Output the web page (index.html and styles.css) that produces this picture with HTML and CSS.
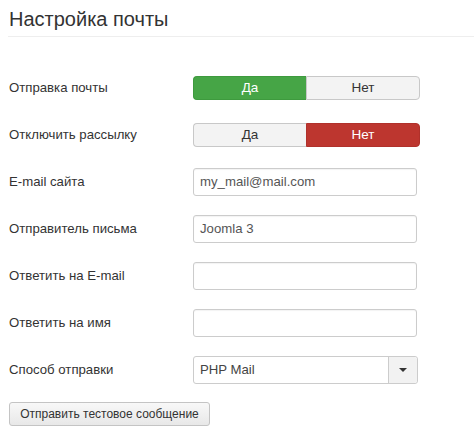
FILE: index.html
```html
<!DOCTYPE html>
<html lang="ru">
<head>
<meta charset="utf-8">
<link rel="stylesheet" href="styles.css">
</head>
<body>
<div class="page">
  <h2 class="title">Настройка почты</h2>
  <div class="form">
    <div class="row">
      <label class="label">Отправка почты</label>
      <div class="toggle">
        <span class="seg seg-yes active-green">Да</span>
        <span class="seg seg-no">Нет</span>
      </div>
    </div>
    <div class="row">
      <label class="label">Отключить рассылку</label>
      <div class="toggle">
        <span class="seg seg-yes">Да</span>
        <span class="seg seg-no active-red">Нет</span>
      </div>
    </div>
    <div class="row">
      <label class="label">E-mail сайта</label>
      <div class="input">my_mail@mail.com</div>
    </div>
    <div class="row">
      <label class="label">Отправитель письма</label>
      <div class="input">Joomla 3</div>
    </div>
    <div class="row">
      <label class="label">Ответить на E-mail</label>
      <div class="input"></div>
    </div>
    <div class="row">
      <label class="label">Ответить на имя</label>
      <div class="input"></div>
    </div>
    <div class="row">
      <label class="label">Способ отправки</label>
      <div class="select">
        <span class="select-value">PHP Mail</span>
        <span class="select-arrow"><span class="caret"></span></span>
      </div>
    </div>
  </div>
  <button class="btn">Отправить тестовое сообщение</button>
</div>
</body>
</html>
```
FILE: styles.css
```css
* { box-sizing: border-box; }
html, body { margin: 0; padding: 0; background: #fff; }
body {
  font-family: "Liberation Sans", Arial, sans-serif;
  color: #333;
  font-size: 13.2px;
}
.page { padding: 0 0 0 9px; }
.title {
  margin: 0;
  font-weight: normal;
  font-size: 20px;
  line-height: 24px;
  padding-top: 7px;
  height: 37px;
  border-bottom: 1px solid #eee;
  margin-left: -1px;
  padding-left: 1px;
  color: #333;
}
.form { margin-top: 27px; }
.row {
  display: flex;
  align-items: center;
  height: 47px;
}
.label {
  width: 184px;
  flex: none;
  font-size: 13.2px;
  color: #333;
}
.toggle {
  display: flex;
  width: 227px;
  height: 24px;
}
.seg {
  flex: 1;
  display: flex;
  align-items: center;
  justify-content: center;
  font-size: 13.5px;
  color: #333;
  background: #f3f3f3;
  border: 1px solid #c8c8c8;
}
.seg-yes { border-radius: 4px 0 0 4px; border-right: none; }
.seg-no { border-radius: 0 4px 4px 0; }
.active-green {
  background: #46a546;
  border-color: #3e9a3e;
  color: #fff;
}
.active-red {
  background: #bd362f;
  border-color: #b0312b;
  color: #fff;
}
.input {
  width: 224px;
  height: 28px;
  border: 1px solid #ccc;
  border-radius: 3px;
  padding: 0 6px;
  display: flex;
  align-items: center;
  font-size: 13.2px;
  color: #555;
  box-shadow: inset 0 1px 1px rgba(0,0,0,0.05);
}
.select {
  width: 225px;
  height: 28px;
  border: 1px solid #ccc;
  border-radius: 3px;
  display: flex;
  font-size: 13.2px;
  color: #444;
}
.select-value {
  flex: 1;
  display: flex;
  align-items: center;
  padding-left: 6px;
}
.select-arrow {
  width: 29px;
  border-left: 1px solid #ccc;
  background: #f2f2f2;
  display: flex;
  align-items: center;
  justify-content: center;
  border-radius: 0 3px 3px 0;
}
.caret {
  width: 0;
  height: 0;
  border-left: 4px solid transparent;
  border-right: 4px solid transparent;
  border-top: 4px solid #333;
}
.btn {
  margin-top: 9px;
  width: 201px;
  height: 24px;
  border: 1px solid #c4c4c4;
  border-radius: 3px;
  background: linear-gradient(#f8f8f8, #e8e8e8);
  font-family: "Liberation Sans", Arial, sans-serif;
  font-size: 12px;
  color: #333;
  padding: 0;
  display: block;
}
```
